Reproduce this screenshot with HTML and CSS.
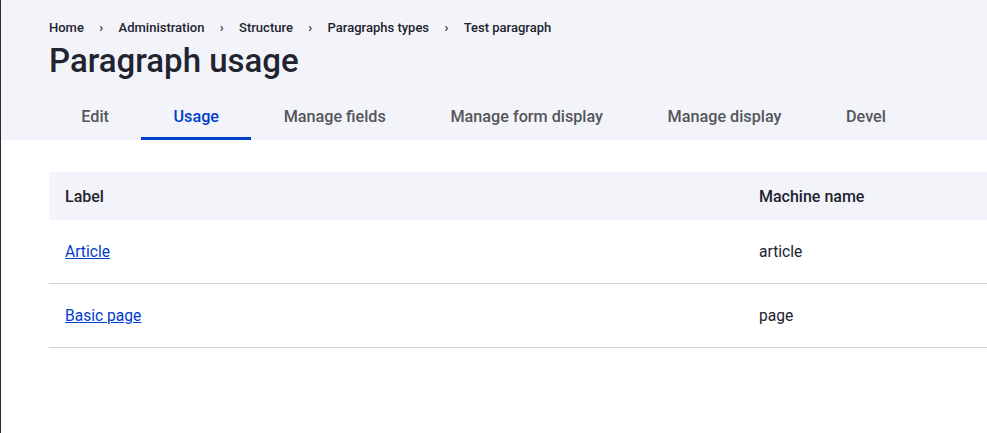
FILE: index.html
```html
<!DOCTYPE html>
<html lang="en">
<head>
<meta charset="utf-8">
<title>Paragraph usage</title>
<link rel="stylesheet" href="styles.css">
</head>
<body>
<div class="page">
  <header class="page-header">
    <nav class="breadcrumb">
      <a href="#">Home</a><span class="sep">›</span>
      <a href="#">Administration</a><span class="sep">›</span>
      <a href="#">Structure</a><span class="sep">›</span>
      <a href="#">Paragraphs types</a><span class="sep">›</span>
      <a href="#">Test paragraph</a>
    </nav>
    <h1 class="page-title">Paragraph usage</h1>
    <nav class="tabs">
      <a class="tab" href="#">Edit</a>
      <a class="tab active" href="#">Usage</a>
      <a class="tab" href="#">Manage fields</a>
      <a class="tab" href="#">Manage form display</a>
      <a class="tab" href="#">Manage display</a>
      <a class="tab" href="#">Devel</a>
    </nav>
  </header>
  <main class="content">
    <table class="usage-table">
      <thead>
        <tr><th class="col-label">Label</th><th>Machine name</th></tr>
      </thead>
      <tbody>
        <tr><td><a href="#">Article</a></td><td>article</td></tr>
        <tr><td><a href="#">Basic page</a></td><td>page</td></tr>
      </tbody>
    </table>
  </main>
</div>
</body>
</html>
```

FILE: styles.css
```css
html, body {
  margin: 0;
  padding: 0;
  background: #fff;
}
body {
  font-family: Roboto, "Noto Sans", sans-serif;
  color: #222330;
  overflow: hidden;
}
.page {
  border-left: 1px solid #2b2b2b;
  min-height: 433px;
  box-sizing: border-box;
}
.page-header {
  background: #f3f4f9;
  padding: 19px 0 0 48px;
}
.breadcrumb {
  display: flex;
  align-items: center;
  font-size: 13px;
  font-weight: 500;
  line-height: 18px;
}
.breadcrumb a {
  color: #222330;
  text-decoration: none;
}
.breadcrumb .sep {
  padding: 0 15.4px;
  font-size: 13px;
}
.page-title {
  margin: 4px 0 0;
  font-size: 33px;
  font-weight: 500;
  line-height: 40px;
  color: #222330;
}
.tabs {
  display: flex;
  margin-top: 16px;
}
.tab {
  padding: 3px 32.3px 0;
  height: 37px;
  line-height: 34px;
  font-size: 16.2px;
  font-weight: 500;
  color: #55565b;
  text-decoration: none;
  border-bottom: 3px solid transparent;
}
.tab.active {
  color: #003ecc;
  border-bottom-color: #003ecc;
}
.content {
  padding: 32px 0 0 48px;
}
.usage-table {
  border-collapse: collapse;
  width: 1000px;
  font-size: 15.6px;
}
.usage-table th {
  background: #f3f4f9;
  text-align: left;
  font-weight: 500;
  height: 48px;
  padding: 0 16px;
  font-size: 16px;
}
.usage-table .col-label {
  width: 662px;
}
.usage-table td {
  height: 63px;
  padding: 0 16px;
  border-bottom: 1px solid #d3d4d9;
  color: #222330;
}
.usage-table td a {
  color: #003ecc;
  text-decoration: underline;
}
```
